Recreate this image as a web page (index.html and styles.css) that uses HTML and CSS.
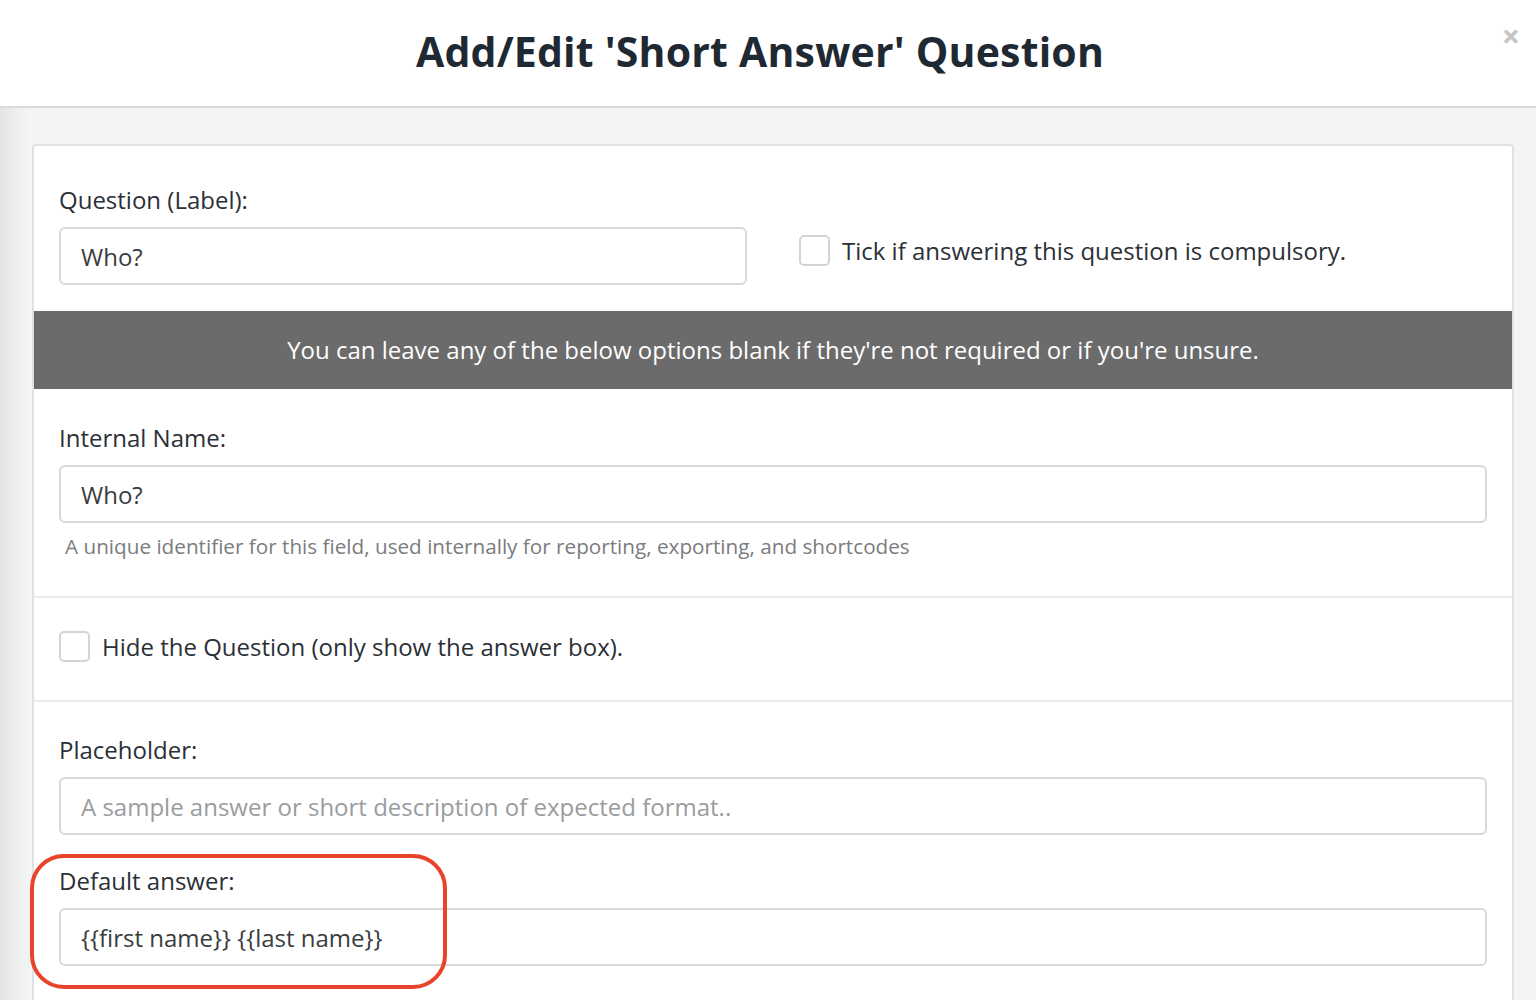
FILE: index.html
```html
<!DOCTYPE html>
<html lang="en">
<head>
<meta charset="utf-8">
<title>Add/Edit 'Short Answer' Question</title>
<link rel="stylesheet" href="styles.css">
</head>
<body>
<div class="modal">
  <header class="modal-header">
    <h1 class="modal-title">Add/Edit 'Short Answer' Question</h1>
    <span class="modal-close">&times;</span>
  </header>
  <main class="modal-body">
    <div class="card">
      <section class="section section-top">
        <div class="field field-question">
          <label class="label">Question (Label):</label>
          <div class="input">Who?</div>
        </div>
        <div class="check-row check-compulsory">
          <span class="checkbox"></span>
          <span class="check-text">Tick if answering this question is compulsory.</span>
        </div>
      </section>
      <div class="notice">You can leave any of the below options blank if they're not required or if you're unsure.</div>
      <section class="section section-internal">
        <label class="label">Internal Name:</label>
        <div class="input">Who?</div>
        <p class="help">A unique identifier for this field, used internally for reporting, exporting, and shortcodes</p>
      </section>
      <section class="section section-hide">
        <div class="check-row">
          <span class="checkbox"></span>
          <span class="check-text">Hide the Question (only show the answer box).</span>
        </div>
      </section>
      <section class="section section-last">
        <label class="label">Placeholder:</label>
        <div class="input placeholder">A sample answer or short description of expected format..</div>
        <div class="default-group">
          <label class="label">Default answer:</label>
          <div class="input">{{first name}} {{last name}}</div>
          <span class="highlight"></span>
        </div>
      </section>
    </div>
  </main>
</div>
</body>
</html>
```

FILE: styles.css
```css
* { box-sizing: border-box; }
html, body { margin: 0; padding: 0; height: 1000px; overflow: hidden; }
body {
  font-family: "Open Sans", "Noto Sans", sans-serif;
  color: #333;
  background: #f3f4f4;
}
.modal { display: flex; flex-direction: column; height: 1000px; }
.modal-header {
  flex: none;
  position: relative;
  height: 108px;
  padding-right: 16px;
  background: #fff;
  border-bottom: 2px solid #d9dcdd;
  display: flex;
  justify-content: center;
  align-items: flex-start;
}
.modal-title {
  margin: 23px 0 0;
  font-size: 41px;
  line-height: 56px;
  font-weight: 700;
  color: #1f2933;
  letter-spacing: 0.2px;
}
.modal-close {
  position: absolute;
  right: 16px;
  top: 18px;
  font-size: 32px;
  line-height: 36px;
  font-weight: 700;
  color: #c3c5c6;
}
.modal-body {
  flex: 1;
  padding: 36px 22px 0 32px;
  background: linear-gradient(to right, #e2e4e5 0, #eceeee 14px, #f3f4f4 30px);
}
.card {
  background: #fff;
  border: 2px solid #dfe2e4;
  border-bottom: none;
  border-radius: 4px 4px 0 0;
  height: 900px;
}
.section { padding: 0 25px; border-bottom: 2px solid #e9ebec; }
.section-top {
  display: flex;
  align-items: flex-start;
  padding-top: 39px;
  padding-bottom: 26px;
  border-bottom: none;
}
.field-question { width: 688px; flex: none; }
.check-compulsory { margin-left: 52px; margin-top: 49px; }
.label {
  display: block;
  font-size: 24px;
  line-height: 30px;
  color: #2b3036;
  margin-bottom: 12px;
}
.input {
  height: 58px;
  border: 2px solid #d5d9dc;
  border-radius: 6px;
  padding: 0 20px;
  display: flex;
  align-items: center;
  font-size: 24px;
  color: #3a3d40;
  background: #fff;
}
.input.placeholder { color: #9a9c9e; }
.check-row { display: flex; align-items: center; height: 33px; }
.checkbox {
  width: 31px;
  height: 31px;
  border: 2px solid #d2d5d8;
  border-radius: 5px;
  background: #fff;
  flex: none;
}
.check-text {
  margin-left: 12px;
  font-size: 24px;
  line-height: 33px;
  color: #2b3036;
}
.notice {
  background: #6b6b6b;
  color: #fff;
  text-align: center;
  font-size: 24px;
  height: 78px;
  line-height: 78px;
}
.section-internal { padding-top: 34px; padding-bottom: 36px; }
.help {
  margin: 9px 0 0 6px;
  font-size: 20.7px;
  line-height: 28px;
  color: #7a7c7e;
}
.section-hide { padding-top: 32px; padding-bottom: 37px; }
.section-last { padding-top: 33px; border-bottom: none; }
.default-group { position: relative; margin-top: 31px; }
.highlight {
  position: absolute;
  left: -29px;
  top: -12px;
  width: 417px;
  height: 135px;
  border: 4px solid #e8432b;
  border-radius: 34px;
  pointer-events: none;
}
```
